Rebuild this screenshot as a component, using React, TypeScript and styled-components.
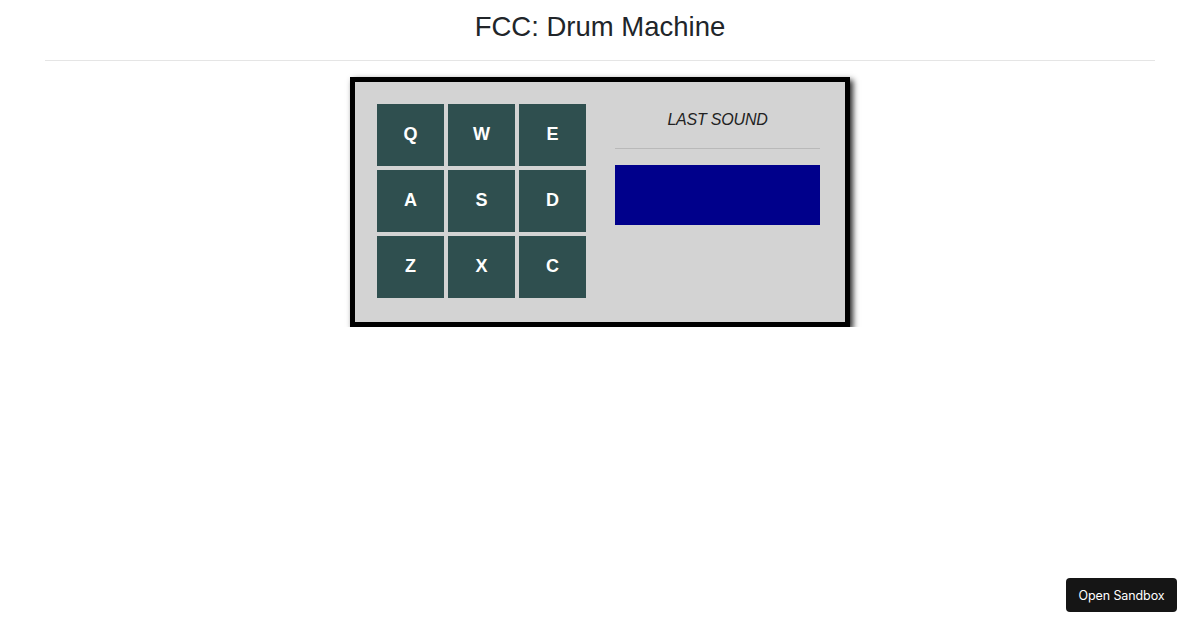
import React from "react";
import styled, { createGlobalStyle } from "styled-components";

const Global = createGlobalStyle`
  html, body { margin: 0; padding: 0; background: #fff; }
  body { font-family: "Liberation Sans", Arial, sans-serif; color: #212529; }
`;

const Container = styled.div`
  width: 1110px;
  margin: 0 auto;
  display: flex;
  flex-direction: column;
  align-items: center;
`;

const Title = styled.h1`
  margin: 0;
  padding-top: 9px;
  font-size: 27.5px;
  font-weight: 400;
  line-height: 36px;
  color: #212529;
`;

const Rule = styled.hr`
  width: 100%;
  margin: 15px 0 16px;
  border: 0;
  border-top: 1px solid rgba(0, 0, 0, 0.1);
`;

const Machine = styled.div`
  width: 490px;
  height: 240px;
  box-sizing: content-box;
  border: 5px solid #000;
  background: #d3d3d3;
  box-shadow: 3px 3px 6px rgba(0, 0, 0, 0.85);
  display: flex;
  gap: 29px;
`;

const PadGrid = styled.div`
  margin: 22px 0 0 22px;
  display: grid;
  grid-template-columns: repeat(3, 67px);
  grid-auto-rows: 62px;
  gap: 4px;
  align-content: start;
`;

const Pad = styled.button`
  border: 0;
  padding: 0 0 2px;
  background: #2f4f4f;
  color: #fff;
  font-family: "Liberation Sans", Arial, sans-serif;
  font-weight: 700;
  font-size: 18px;
  cursor: pointer;
`;

const Side = styled.div`
  width: 205px;
  padding-top: 28px;
  display: flex;
  flex-direction: column;
`;

const Label = styled.div`
  font-style: italic;
  font-size: 16px;
  line-height: 20px;
  text-align: center;
  color: #222;
  letter-spacing: -0.2px;
`;

const SideRule = styled.hr`
  width: 100%;
  margin: 18px 0 16px;
  border: 0;
  border-top: 1px solid rgba(0, 0, 0, 0.12);
`;

const Display = styled.div`
  height: 60px;
  background: #00008b;
  color: #fff;
`;

const SandboxButton = styled.button`
  position: fixed;
  right: 23px;
  bottom: 18px;
  height: 34px;
  width: 111px;
  border: 0;
  border-radius: 4px;
  background: #151515;
  color: #fff;
  font-family: Inter, "Liberation Sans", sans-serif;
  font-size: 12.5px;
  letter-spacing: -0.1px;
  padding: 0;
`;

const keys = ["Q", "W", "E", "A", "S", "D", "Z", "X", "C"];

export default function App() {
  return (
    <>
      <Global />
      <Container>
        <Title>FCC: Drum Machine</Title>
        <Rule />
        <Machine id="drum-machine">
          <PadGrid>
            {keys.map((k) => (
              <Pad key={k} className="drum-pad">
                {k}
              </Pad>
            ))}
          </PadGrid>
          <Side>
            <Label>LAST SOUND</Label>
            <SideRule />
            <Display id="display" />
          </Side>
        </Machine>
      </Container>
      <SandboxButton>Open Sandbox</SandboxButton>
    </>
  );
}
